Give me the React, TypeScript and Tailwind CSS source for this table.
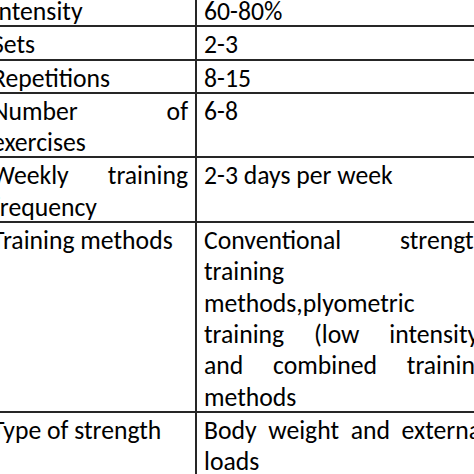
import React from "react";

type Line = { words: string[]; justify?: boolean };

const J = (s: string): Line => ({ words: s.split(" "), justify: true });
const P = (s: string): Line => ({ words: [s] });

const rows: { left: Line[]; right: Line[] }[] = [
  { left: [P("Intensity")], right: [P("60-80%")] },
  { left: [P("Sets")], right: [P("2-3")] },
  { left: [P("Repetitions")], right: [P("8-15")] },
  { left: [J("Number of"), P("exercises")], right: [P("6-8")] },
  { left: [J("Weekly training"), P("frequency")], right: [P("2-3 days per week")] },
  {
    left: [P("Training methods")],
    right: [
      J("Conventional strength"),
      P("training"),
      P("methods,plyometric"),
      J("training (low intensity)"),
      J("and combined training"),
      P("methods"),
    ],
  },
  { left: [P("Type of strength")], right: [J("Body weight and external"), P("loads")] },
];

function Cell({ lines }: { lines: Line[] }) {
  return (
    <div className="flex flex-col">
      {lines.map((l, i) =>
        l.justify ? (
          <div key={i} className="flex justify-between whitespace-nowrap h-[31.3px] pt-[2px]">
            {l.words.map((w, j) => (
              <span key={j}>{w}</span>
            ))}
          </div>
        ) : (
          <div key={i} className="whitespace-pre h-[31.3px] pt-[2px]">
            {l.words.join(" ")}
          </div>
        )
      )}
    </div>
  );
}

export default function App() {
  return (
    <div className="w-[474px] h-[474px] overflow-hidden bg-white">
      <div
        className="grid grid-cols-[210px_301px] ml-[-17px] mt-[-8px] border-t-2 border-l-2 border-[#262626] text-black text-[25.7px] leading-[31.3px]"
        style={{ fontFamily: "Carlito, Calibri, Lato, 'Liberation Sans', sans-serif" }}
      >
        {rows.map((r, i) => (
          <React.Fragment key={i}>
            <div className="border-b-2 border-[#262626] pl-[7px] pr-[7px]">
              <Cell lines={r.left} />
            </div>
            <div className="border-b-2 border-l-2 border-r-2 border-[#262626] pl-[7px] pr-[7px]">
              <Cell lines={r.right} />
            </div>
          </React.Fragment>
        ))}
      </div>
    </div>
  );
}
